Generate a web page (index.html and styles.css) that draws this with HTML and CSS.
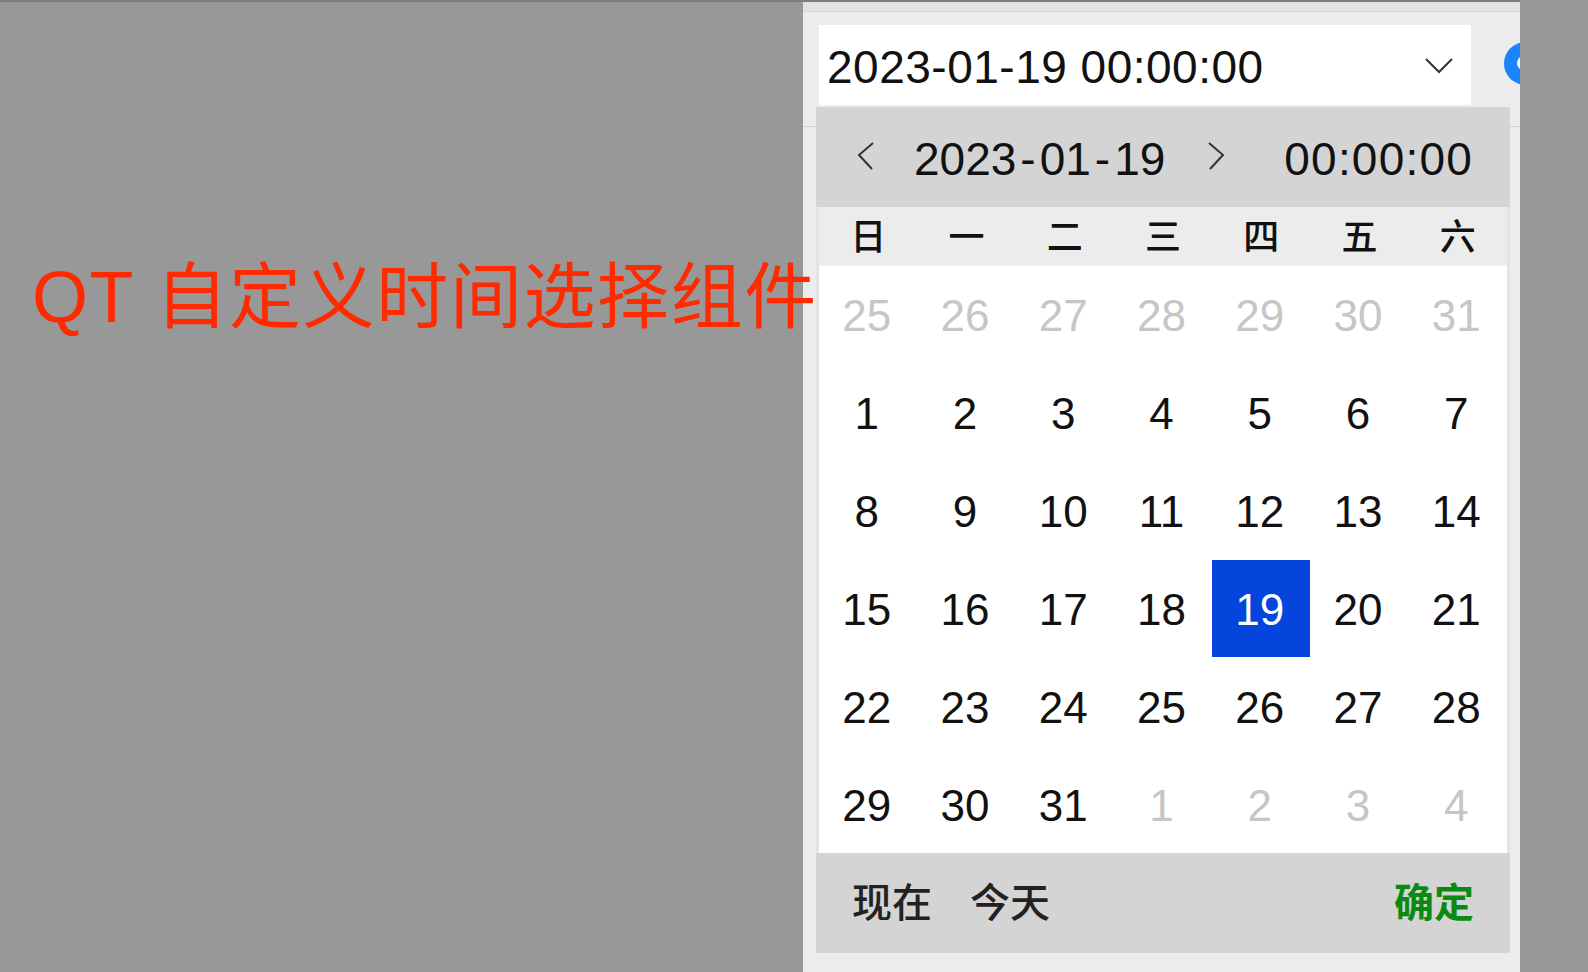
FILE: index.html
```html
<!DOCTYPE html>
<html lang="zh">
<head>
<meta charset="utf-8">
<title>QT 自定义时间选择组件</title>
<link rel="stylesheet" href="styles.css">
</head>
<body>
<div class="left">
  <div class="title">QT 自定义时间选择组件</div>
</div>
<div class="panel">
  <div class="topband"></div>
  <div class="toolbar">
    <div class="input">
      <span class="input-text">2023-01-19 00:00:00</span>
      <svg class="chev-down" width="30" height="17" viewBox="0 0 30 17"><polyline points="2,2 15,15 28,2" fill="none" stroke="#333" stroke-width="2"/></svg>
    </div>
    <div class="badge"><span class="badge-mark"></span></div>
  </div>
  <div class="popup">
    <div class="ph">
      <svg class="arrow arrow-prev" width="18" height="28" viewBox="0 0 18 28"><polyline points="16,1 2,13 15,27" fill="none" stroke="#333" stroke-width="2"/></svg>
      <div class="ph-date">2023<span class="sep">-</span>01<span class="sep">-</span>19</div>
      <svg class="arrow arrow-next" width="18" height="28" viewBox="0 0 18 28"><polyline points="2,1 16,13 3,27" fill="none" stroke="#333" stroke-width="2"/></svg>
      <div class="ph-time">00:00:00</div>
    </div>
    <div class="pbody">
      <div class="week">
        <span>日</span><span>一</span><span>二</span><span>三</span><span>四</span><span>五</span><span>六</span>
      </div>
      <div class="days">
        <span class="d other">25</span><span class="d other">26</span><span class="d other">27</span><span class="d other">28</span><span class="d other">29</span><span class="d other">30</span><span class="d other">31</span>
        <span class="d">1</span><span class="d">2</span><span class="d">3</span><span class="d">4</span><span class="d">5</span><span class="d">6</span><span class="d">7</span>
        <span class="d">8</span><span class="d">9</span><span class="d">10</span><span class="d">11</span><span class="d">12</span><span class="d">13</span><span class="d">14</span>
        <span class="d">15</span><span class="d">16</span><span class="d">17</span><span class="d">18</span><span class="d sel">19</span><span class="d">20</span><span class="d">21</span>
        <span class="d">22</span><span class="d">23</span><span class="d">24</span><span class="d">25</span><span class="d">26</span><span class="d">27</span><span class="d">28</span>
        <span class="d">29</span><span class="d">30</span><span class="d">31</span><span class="d other">1</span><span class="d other">2</span><span class="d other">3</span><span class="d other">4</span>
      </div>
    </div>
    <div class="pf">
      <span class="pf-btn">现在</span>
      <span class="pf-btn pf-today">今天</span>
      <span class="pf-ok">确定</span>
    </div>
  </div>
</div>
</body>
</html>
```

FILE: styles.css
```css
html, body {
  margin: 0;
  padding: 0;
}
body {
  width: 1588px;
  height: 972px;
  display: flex;
  background: #989898;
  overflow: hidden;
  font-family: "Liberation Sans", "Noto Sans CJK SC", sans-serif;
  color: #111;
}
.left {
  width: 803px;
  flex: none;
  border-top: 2px solid #7e7e7e;
  box-sizing: border-box;
}
.title {
  position: relative;
  z-index: 2;
  margin-top: 259px;
  padding-left: 32px;
  font-size: 72px;
  line-height: 72px;
  letter-spacing: 1.6px;
  color: #ff2a00;
  white-space: nowrap;
}
.panel {
  width: 717px;
  flex: none;
  position: relative;
  overflow: hidden;
  background: #ececec;
  border-top: 2px solid #7e7e7e;
  box-sizing: border-box;
}
.topband {
  height: 9px;
  background: #e3e3e3;
  border-bottom: 1px solid #d6d6d6;
}
.toolbar {
  height: 115px;
  box-sizing: border-box;
  border-bottom: 1px solid #d3d3d3;
  display: flex;
  align-items: flex-start;
  padding: 13px 0 0 16px;
}
.input {
  width: 652px;
  height: 80px;
  flex: none;
  box-sizing: border-box;
  background: #fff;
  display: flex;
  align-items: center;
  padding: 0 17px 0 8px;
}
.input-text {
  font-size: 46px;
  letter-spacing: 0.5px;
  color: #111;
  flex: 1;
  white-space: nowrap;
  padding-top: 4px;
}
.chev-down {
  flex: none;
  margin-top: 1px;
}
.badge {
  flex: none;
  width: 43px;
  height: 43px;
  border-radius: 50%;
  background: #1a84ff;
  margin: 17px 0 0 33px;
  position: relative;
}
.badge-mark {
  position: absolute;
  left: 13px;
  top: 14px;
  width: 14px;
  height: 14px;
  border-radius: 50%;
  background: #fff;
}
.popup {
  position: absolute;
  left: 13px;
  top: 105px;
  width: 694px;
  height: 846px;
  background: #e4e4e4;
  display: flex;
  flex-direction: column;
}
.ph {
  height: 100px;
  flex: none;
  box-sizing: border-box;
  background: #d4d4d4;
  display: flex;
  align-items: center;
  padding: 4px 38px 0 41px;
  font-size: 46px;
  color: #111;
}
.arrow {
  flex: none;
  margin-top: -7px;
}
.ph-date {
  margin-left: 39px;
  white-space: nowrap;
}
.sep {
  margin: 0 4px;
}
.arrow-next {
  margin-left: 42px;
}
.ph-time {
  margin-left: auto;
  letter-spacing: 1.2px;
  margin-right: -1px;
  white-space: nowrap;
}
.pbody {
  flex: 1;
  display: flex;
  flex-direction: column;
  padding: 0 3px;
}
.week {
  height: 59px;
  flex: none;
  box-sizing: border-box;
  padding-bottom: 5px;
  background: #ececec;
  display: grid;
  grid-template-columns: repeat(7, 1fr);
  align-items: center;
  justify-items: center;
  font-family: "Noto Sans CJK SC", sans-serif;
  font-size: 36px;
  font-weight: 500;
  color: #111;
}
.days {
  flex: 1;
  background: #fff;
  display: grid;
  grid-template-columns: repeat(7, 1fr);
  grid-template-rows: repeat(6, 1fr);
}
.d {
  display: flex;
  align-items: center;
  justify-content: center;
  padding-top: 3px;
  padding-right: 3px;
  font-size: 44px;
  color: #111;
}
.d.other {
  color: #c6c6c6;
}
.d.sel {
  background: #0545dc;
  color: #fff;
}
.pf {
  height: 100px;
  flex: none;
  box-sizing: border-box;
  background: #d4d4d4;
  display: flex;
  align-items: center;
  padding: 0 36px 6px 36px;
  font-family: "Noto Sans CJK SC", sans-serif;
  font-size: 40px;
}
.pf-btn {
  color: #222;
  font-weight: 500;
}
.pf-today {
  margin-left: 38px;
}
.pf-ok {
  margin-left: auto;
  color: #0a8a12;
  font-weight: 700;
}
```
